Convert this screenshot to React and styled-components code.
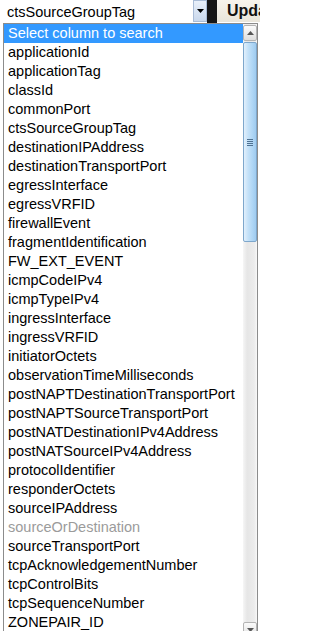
import styled, { createGlobalStyle } from "styled-components"

const GlobalStyle = createGlobalStyle`
    html, body {
        margin: 0;
        padding: 0;
        background: #ffffff;
        overflow: hidden;
    }
    body {
        font-family: "Liberation Sans", Arial, sans-serif;
    }
`

const COLUMNS = [
    "applicationId",
    "applicationTag",
    "classId",
    "commonPort",
    "ctsSourceGroupTag",
    "destinationIPAddress",
    "destinationTransportPort",
    "egressInterface",
    "egressVRFID",
    "firewallEvent",
    "fragmentIdentification",
    "FW_EXT_EVENT",
    "icmpCodeIPv4",
    "icmpTypeIPv4",
    "ingressInterface",
    "ingressVRFID",
    "initiatorOctets",
    "observationTimeMilliseconds",
    "postNAPTDestinationTransportPort",
    "postNAPTSourceTransportPort",
    "postNATDestinationIPv4Address",
    "postNATSourceIPv4Address",
    "protocolIdentifier",
    "responderOctets",
    "sourceIPAddress",
    "sourceOrDestination",
    "sourceTransportPort",
    "tcpAcknowledgementNumber",
    "tcpControlBits",
    "tcpSequenceNumber",
    "ZONEPAIR_ID",
]

const DISABLED = ["sourceOrDestination"]

const Page = styled.div`
    width: 260px;
    height: 631px;
    overflow: hidden;
    position: relative;
`

const Toolbar = styled.div`
    display: flex;
    height: 23px;
`

const SelectBox = styled.div`
    flex: 1;
    display: flex;
    align-items: center;
    padding-left: 7px;
    font-size: 14.5px;
    color: #000;
    background: #fff;
`

const ArrowButton = styled.div`
    width: 14px;
    height: 22px;
    display: flex;
    align-items: center;
    justify-content: center;
    box-sizing: border-box;
    border: 1px solid #a9bcd6;
    background: linear-gradient(to bottom, #e9f0fa, #c9d8ec);
`

const DarkEdge = styled.div`
    width: 10px;
    height: 23px;
    background: #161616;
`

const UpdateButton = styled.div`
    width: 43px;
    height: 22px;
    display: flex;
    align-items: center;
    padding-left: 10px;
    box-sizing: border-box;
    background: linear-gradient(to bottom, #f7f4ec, #e9e5da);
    font-size: 16px;
    font-weight: bold;
    color: #111;
    white-space: nowrap;
    overflow: hidden;
`

const ListBox = styled.div`
    margin-left: 3px;
    width: 255px;
    height: 617px;
    box-sizing: border-box;
    border: 1px solid #8c8c8c;
    display: flex;
    background: #fff;
`

const Options = styled.div`
    flex: 1;
    overflow: hidden;
`

const Option = styled.div`
    height: 19px;
    line-height: 19px;
    padding-left: 4px;
    font-size: 14.5px;
    white-space: nowrap;
    color: ${({ $selected, $disabled }) => ($selected ? "#fff" : $disabled ? "#9b9b9b" : "#000")};
    background: ${({ $selected }) => ($selected ? "#3399ff" : "transparent")};
`

const Scrollbar = styled.div`
    width: 14px;
    display: flex;
    flex-direction: column;
    padding: 1px 0;
    box-sizing: border-box;
    background: linear-gradient(to right, #f6f6f6, #e6e6e6 30%, #ececec 80%, #f8f8f8);
`

const ScrollButton = styled.div`
    height: 16px;
    box-sizing: border-box;
    border: 1px solid #b4b4b4;
    border-radius: 2px;
    background: linear-gradient(to bottom, #fbfbfb, #dedede);
    display: flex;
    align-items: center;
    justify-content: center;
`

const Thumb = styled.div`
    height: 200px;
    margin-top: 1px;
    box-sizing: border-box;
    border: 1px solid #7ea7cc;
    border-radius: 2px;
    background: linear-gradient(to right, #e2f0fc, #c4e1f8 35%, #afd6f5 70%, #9fcbef);
    display: flex;
    align-items: center;
    justify-content: center;
`

const Grip = styled.div`
    width: 6px;
    display: flex;
    flex-direction: column;
    gap: 1px;
    & > span {
        display: block;
        height: 1px;
        background: #4e7192;
    }
`

const Track = styled.div`
    flex: 1;
`

function Triangle({ up, color = "#333" }) {
    return (
        <svg width="7" height="4" viewBox="0 0 7 4">
            <path d={up ? "M0 4 L3.5 0 L7 4 Z" : "M0 0 L7 0 L3.5 4 Z"} fill={color} />
        </svg>
    )
}

export default function App() {
    return (
        <Page>
            <GlobalStyle />
            <Toolbar>
                <SelectBox>ctsSourceGroupTag</SelectBox>
                <ArrowButton>
                    <Triangle color="#000" />
                </ArrowButton>
                <DarkEdge />
                <UpdateButton>Update</UpdateButton>
            </Toolbar>
            <ListBox>
                <Options>
                    <Option $selected>Select column to search</Option>
                    {COLUMNS.map((name) => (
                        <Option key={name} $disabled={DISABLED.includes(name)}>
                            {name}
                        </Option>
                    ))}
                </Options>
                <Scrollbar>
                    <ScrollButton>
                        <Triangle up color="#555" />
                    </ScrollButton>
                    <Thumb>
                        <Grip>
                            <span />
                            <span />
                            <span />
                            <span />
                        </Grip>
                    </Thumb>
                    <Track />
                    <ScrollButton>
                        <Triangle color="#555" />
                    </ScrollButton>
                </Scrollbar>
            </ListBox>
        </Page>
    )
}
